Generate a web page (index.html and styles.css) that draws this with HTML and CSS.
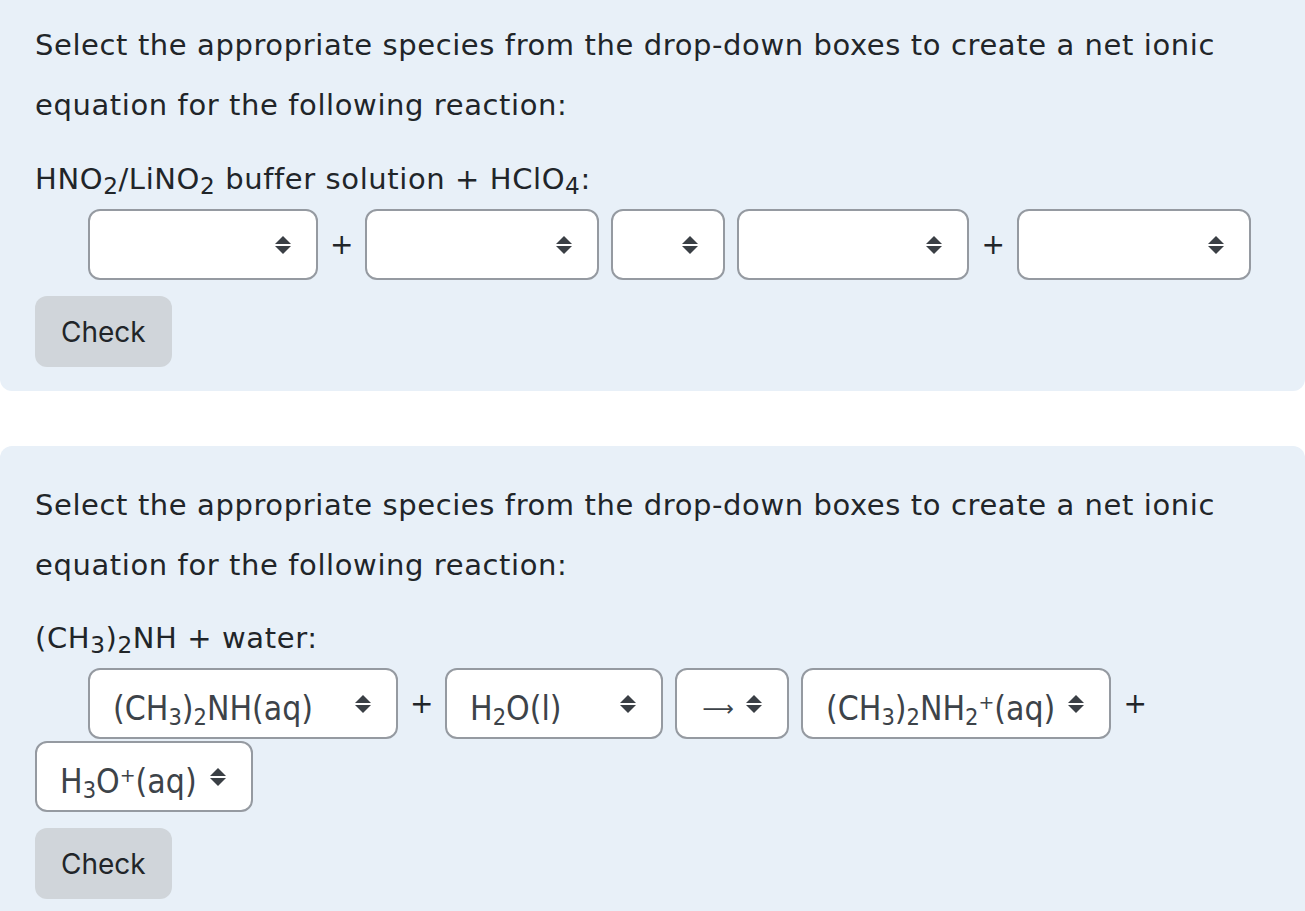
FILE: index.html
```html
<!DOCTYPE html>
<html lang="en">
<head>
<meta charset="utf-8">
<title>Net ionic equations</title>
<link rel="stylesheet" href="styles.css">
</head>
<body>
<section class="panel panel-first">
  <p class="prompt">Select the appropriate species from the drop-down boxes to create a net ionic equation for the following reaction:</p>
  <p class="reaction">HNO<sub>2</sub>/LiNO<sub>2</sub> buffer solution + HClO<sub>4</sub>:</p>
  <div class="equation">
    <div class="select w230"><span class="val"></span><svg class="caret" viewBox="0 0 16 18" width="16" height="18"><path d="M0 8 L8 0 L16 8 Z M0 10 L8 18 L16 10 Z"/></svg></div>
    <span class="op">+</span>
    <div class="select w234"><span class="val"></span><svg class="caret" viewBox="0 0 16 18" width="16" height="18"><path d="M0 8 L8 0 L16 8 Z M0 10 L8 18 L16 10 Z"/></svg></div>
    <div class="select w114"><span class="val"></span><svg class="caret" viewBox="0 0 16 18" width="16" height="18"><path d="M0 8 L8 0 L16 8 Z M0 10 L8 18 L16 10 Z"/></svg></div>
    <div class="select w232"><span class="val"></span><svg class="caret" viewBox="0 0 16 18" width="16" height="18"><path d="M0 8 L8 0 L16 8 Z M0 10 L8 18 L16 10 Z"/></svg></div>
    <span class="op">+</span>
    <div class="select w234"><span class="val"></span><svg class="caret" viewBox="0 0 16 18" width="16" height="18"><path d="M0 8 L8 0 L16 8 Z M0 10 L8 18 L16 10 Z"/></svg></div>
  </div>
  <button class="check" type="button">Check</button>
</section>

<section class="panel panel-second">
  <p class="prompt">Select the appropriate species from the drop-down boxes to create a net ionic equation for the following reaction:</p>
  <p class="reaction">(CH<sub>3</sub>)<sub>2</sub>NH + water:</p>
  <div class="equation">
    <div class="select w310"><span class="val">(CH<sub>3</sub>)<sub>2</sub>NH(aq)</span><svg class="caret" viewBox="0 0 16 18" width="16" height="18"><path d="M0 8 L8 0 L16 8 Z M0 10 L8 18 L16 10 Z"/></svg></div>
    <span class="op">+</span>
    <div class="select w218"><span class="val">H<sub>2</sub>O(l)</span><svg class="caret" viewBox="0 0 16 18" width="16" height="18"><path d="M0 8 L8 0 L16 8 Z M0 10 L8 18 L16 10 Z"/></svg></div>
    <div class="select w114"><span class="val arrow">⟶</span><svg class="caret" viewBox="0 0 16 18" width="16" height="18"><path d="M0 8 L8 0 L16 8 Z M0 10 L8 18 L16 10 Z"/></svg></div>
    <div class="select w310"><span class="val">(CH<sub>3</sub>)<sub>2</sub>NH<sub>2</sub>⁺(aq)</span><svg class="caret" viewBox="0 0 16 18" width="16" height="18"><path d="M0 8 L8 0 L16 8 Z M0 10 L8 18 L16 10 Z"/></svg></div>
    <span class="op">+</span>
    <div class="select w218"><span class="val">H<sub>3</sub>O⁺(aq)</span><svg class="caret" viewBox="0 0 16 18" width="16" height="18"><path d="M0 8 L8 0 L16 8 Z M0 10 L8 18 L16 10 Z"/></svg></div>
  </div>
  <button class="check" type="button">Check</button>
</section>
</body>
</html>
```
FILE: styles.css
```css
html, body {
  margin: 0;
  padding: 0;
  background: #ffffff;
}

body {
  font-family: "DejaVu Sans", Verdana, sans-serif;
  color: #212529;
}

.panel {
  background: #e8f0f8;
  padding: 29px 35px 24px 35px;
  border-radius: 12px;
}

.panel-first {
  padding-top: 15px;
  border-radius: 0 0 12px 12px;
  margin-bottom: 55px;
}

.prompt {
  margin: 0;
  font-size: 29px;
  line-height: 60px;
  letter-spacing: 0.6px;
}

.reaction {
  margin: 14px 0 0 0;
  font-size: 29px;
  line-height: 60px;
  letter-spacing: 0.6px;
}

.panel-second .reaction {
  margin-top: 13px;
}

.reaction sub {
  font-size: 0.8em;
  line-height: 0;
  vertical-align: -0.22em;
}

.equation {
  display: flex;
  flex-wrap: wrap;
  align-items: center;
  column-gap: 12px;
  row-gap: 2px;
}

.equation > :first-child {
  margin-left: 53px;
}

.op {
  font-size: 28px;
  line-height: 1;
  color: #212529;
}

.select {
  box-sizing: border-box;
  height: 71px;
  display: flex;
  align-items: center;
  padding: 0 25px 0 23px;
  background: #ffffff;
  border: 2px solid #959aa1;
  border-radius: 12px;
}

.val {
  flex: 1 1 auto;
  min-width: 0;
  font-size: 34px;
  line-height: 1;
  color: #3d4349;
  white-space: nowrap;
  padding-top: 9px;
  transform: scaleX(0.885);
  transform-origin: left center;
}

.val sub {
  font-size: 0.7em;
  line-height: 0;
  vertical-align: -0.2em;
}

.val.arrow {
  font-size: 22px;
  padding-top: 10px;
  transform: none;
  margin-left: 2px;
}

.caret {
  flex: none;
  margin-left: auto;
  fill: #3a3f45;
}

.w114 { width: 114px; }
.w218 { width: 218px; }
.w230 { width: 230px; }
.w232 { width: 232px; }
.w234 { width: 234px; }
.w310 { width: 310px; }

.check {
  display: block;
  margin-top: 16px;
  height: 71px;
  padding: 0 26px;
  border: 0;
  border-radius: 12px;
  background: #d0d5da;
  font-family: Inter, "Liberation Sans", sans-serif;
  font-size: 28px;
  color: #212529;
}
```
